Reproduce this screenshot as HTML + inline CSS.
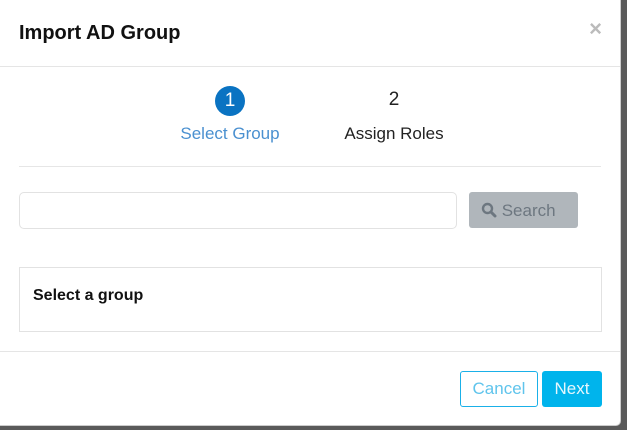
<!DOCTYPE html>
<html><head><style>
*{box-sizing:border-box}
body{margin:0;width:627px;height:430px;background:#5a5a5a;font-family:"Liberation Sans",sans-serif;overflow:hidden;position:relative}
.m{position:absolute;left:0;top:0;width:621px;height:426px;background:#fff;border-radius:0 0 5px 0;border-right:1px solid #ccc;border-bottom:1px solid #ccc}
.h{height:67px;border-bottom:1px solid #e5e5e5;position:relative}
.h h4{margin:0;position:absolute;left:19px;top:22px;font-size:20px;font-weight:bold;color:#111}
.x{position:absolute;right:18px;top:16px;font-size:22px;color:#bbb;font-weight:bold}
.step{position:absolute;text-align:center;font-size:17px;color:#222}
.c{width:30px;height:30px;border-radius:50%;background:#0a73c2;color:#fff;line-height:30px;margin:0 auto;font-size:19px}
.hr{position:absolute;left:19px;right:19px;top:166px;border-top:1px solid #e6e6e6}
.in{position:absolute;left:19px;top:192px;width:438px;height:37px;border:1px solid #e2e2e2;border-radius:5px}
.sb{position:absolute;left:469px;top:192px;width:109px;height:36px;background:#b0b6bb;border-radius:3px;color:#6d7780;font-size:17px;line-height:38px;padding-left:12px}
.box{position:absolute;left:19px;top:267px;width:583px;height:65px;border:1px solid #e2e2e2;font-weight:bold;font-size:16px;padding:19px 13px;color:#111}
.f{position:absolute;left:0;right:0;top:351px;border-top:1px solid #e5e5e5}
.btn{position:absolute;top:371px;height:36px;border-radius:3px;font-size:17px;line-height:36px;text-align:center}
</style></head><body>
<div class="m">
<div class="h"><h4>Import AD Group</h4><span class="x">×</span></div>
<div class="step" style="left:170px;top:86px;width:120px"><div class="c">1</div><div style="color:#4a90d0;margin-top:8px">Select Group</div></div>
<div class="step" style="left:334px;top:86px;width:120px"><div style="height:30px;line-height:28px;font-size:19px">2</div><div style="margin-top:8px">Assign Roles</div></div>
<div class="hr"></div>
<div class="in"></div>
<div class="sb"><svg width="16" height="16" viewBox="0 0 16 16" style="vertical-align:-2px"><circle cx="6.5" cy="6.5" r="4.5" fill="none" stroke="#6d7780" stroke-width="2.4"/><path d="M10 10l4 4" stroke="#6d7780" stroke-width="3" stroke-linecap="round"/></svg> Search</div>
<div class="box">Select a group</div>
<div class="f"></div>
<div class="btn" style="left:460px;width:78px;border:1px solid #1ab0e8;color:#5fc4ec;line-height:34px">Cancel</div>
<div class="btn" style="left:542px;width:60px;background:#00b4ec;color:#e6f7fd">Next</div>
</div>
</body></html>
